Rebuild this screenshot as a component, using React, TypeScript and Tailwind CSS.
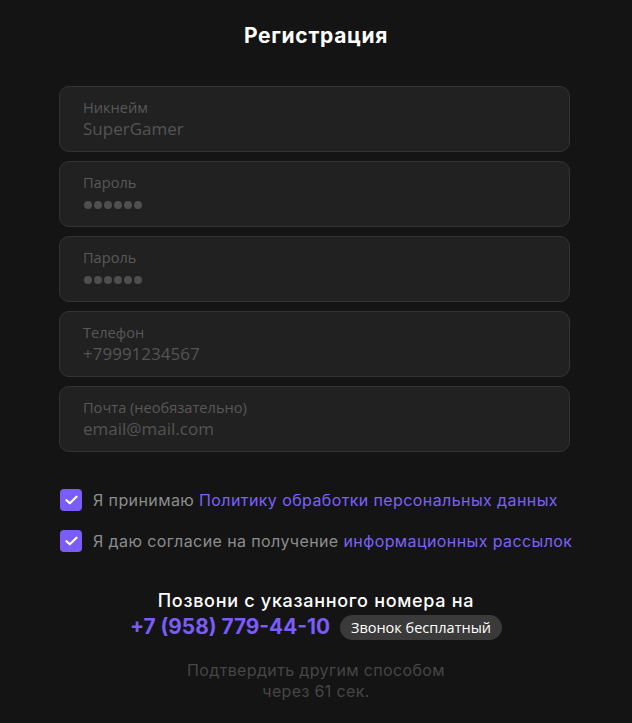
import React from "react";

const fields = [
  { label: "Никнейм", value: "SuperGamer", dots: false },
  { label: "Пароль", value: "", dots: true },
  { label: "Пароль", value: "", dots: true },
  { label: "Телефон", value: "+79991234567", dots: false },
  { label: "Почта (необязательно)", value: "email@mail.com", dots: false },
];

function Check() {
  return (
    <span className="flex h-[22px] w-[22px] shrink-0 items-center justify-center rounded-[4px] bg-[#7a5cf6]">
      <svg width="13" height="10" viewBox="0 0 13 10" fill="none">
        <path d="M1.5 5.2L4.8 8.3L11.5 1.7" stroke="white" strokeWidth="2.2" strokeLinecap="round" strokeLinejoin="round" />
      </svg>
    </span>
  );
}

export default function App() {
  return (
    <div className="min-h-[723px] w-full bg-[#141414] pb-6 font-['Inter',sans-serif]">
      <h1 className="pt-[22px] text-center text-[21px] font-bold leading-[28px] tracking-[0.7px] text-white">Регистрация</h1>
      <div className="ml-[59px] mt-[36px] flex w-[511px] flex-col gap-[9px]">
        {fields.map((f, i) => (
          <div key={i} className="flex h-[66px] flex-col justify-center rounded-[10px] border border-[#333333] bg-[#212121] pl-[23px] font-['Open_Sans',sans-serif]">
            <div className="text-[14.6px] leading-[18px] text-[#585858]">{f.label}</div>
            {f.dots ? (
              <div className="mt-[4px] flex h-[20px] items-center gap-[2px] pl-[1px]">
                {[0, 1, 2, 3, 4, 5].map((d) => (
                  <span key={d} className="h-[8px] w-[8px] rounded-full bg-[#4e4e4e]" />
                ))}
              </div>
            ) : (
              <div className="mt-[1px] text-[17px] leading-[23px] text-[#545454]">{f.value}</div>
            )}
          </div>
        ))}
      </div>
      <div className="ml-[60px] mt-[37px] flex w-[560px] flex-col gap-[19px]">
        <div className="flex items-center gap-[11px] whitespace-nowrap text-[16px] leading-[22px] tracking-[0.4px] text-[#8c8c8c]">
          <Check />
          <span>
            Я принимаю <span className="text-[#7a62f7]">Политику обработки персональных данных</span>
          </span>
        </div>
        <div className="flex items-center gap-[11px] whitespace-nowrap text-[16px] leading-[22px] tracking-[0.4px] text-[#8c8c8c]">
          <Check />
          <span>
            Я даю согласие на получение <span className="text-[#7a62f7]">информационных рассылок</span>
          </span>
        </div>
      </div>
      <div className="mt-[37px] flex flex-col items-center">
        <div className="text-[18px] font-medium leading-[24px] tracking-[0.7px] text-white">Позвони с указанного номера на</div>
        <div className="flex items-center gap-[10px]">
          <span className="text-[20.8px] font-bold leading-[28px] text-[#7a5cf6]">+7 (958) 779-44-10</span>
          <span className="rounded-full bg-[#3a3a3a] px-[11px] py-[3px] font-['Open_Sans',sans-serif] text-[14.5px] leading-[19px] text-white">Звонок бесплатный</span>
        </div>
        <div className="mt-[19px] text-center text-[16px] leading-[21px] tracking-[0.35px] text-[#464646]">
          Подтвердить другим способом
          <br />
          через 61 сек.
        </div>
      </div>
    </div>
  );
}
